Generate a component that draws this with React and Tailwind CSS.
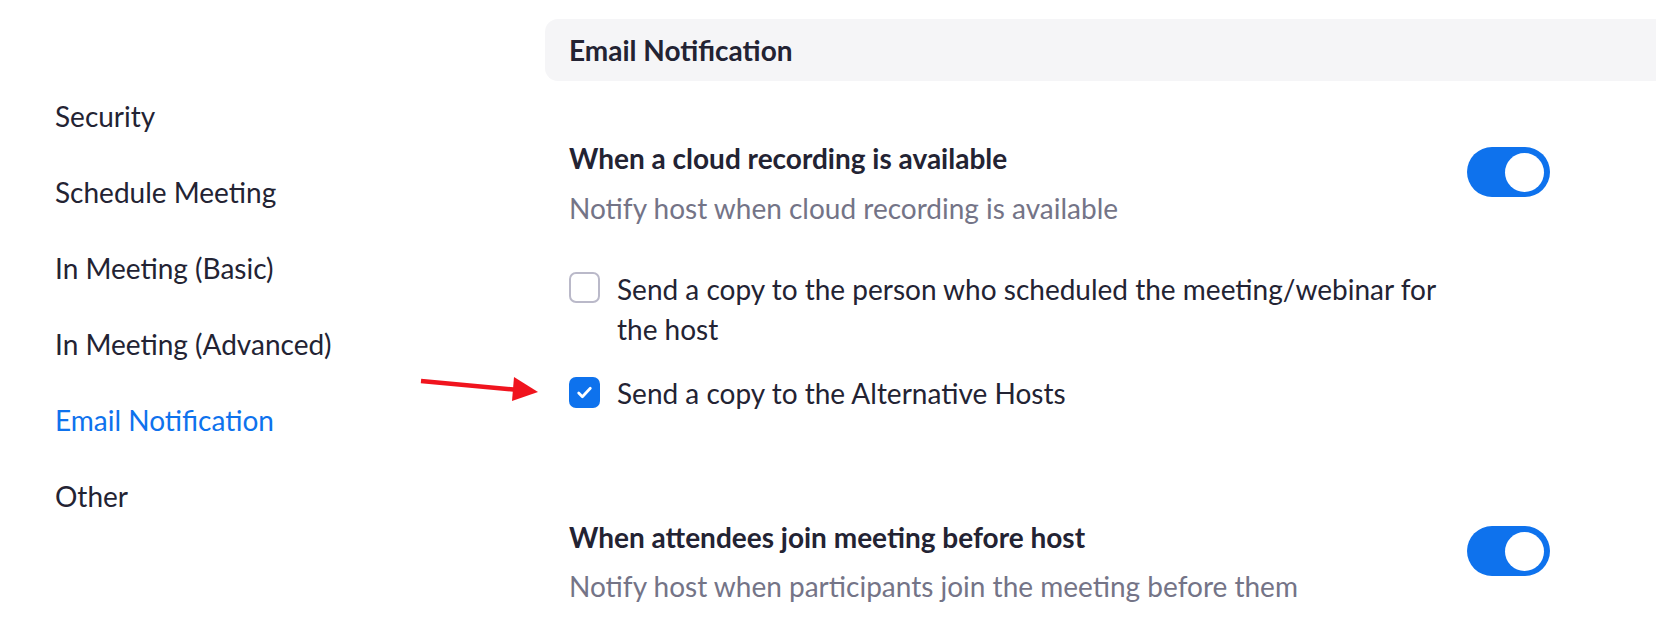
import React from "react";

const font = { fontFamily: "Lato, 'Noto Sans', sans-serif" };

function Toggle() {
  return (
    <div className="mt-[9px] flex h-[50px] w-[83px] shrink-0 items-center justify-end rounded-full bg-[#0e72ed] pr-[6px]">
      <div className="h-[39px] w-[39px] rounded-full bg-white" />
    </div>
  );
}

function Check({ checked, children }) {
  return (
    <div className="flex items-start gap-[17px]">
      {checked ? (
        <div className="mt-[4px] flex h-[31px] w-[31px] shrink-0 items-center justify-center rounded-[7px] bg-[#0e72ed]">
          <svg width="19" height="19" viewBox="0 0 18 18" fill="none">
            <path d="M3.5 9.5l3.5 3.5 7.5-8" stroke="white" strokeWidth="2.6" strokeLinecap="round" strokeLinejoin="round" />
          </svg>
        </div>
      ) : (
        <div className="mt-[3px] h-[31px] w-[31px] shrink-0 rounded-[7px] border-2 border-[#bab9c9] bg-white" />
      )}
      <div className="max-w-[840px] text-[28px] leading-[40px] text-[#232333]">{children}</div>
    </div>
  );
}

export default function App() {
  const nav = [
    "Security",
    "Schedule Meeting",
    "In Meeting (Basic)",
    "In Meeting (Advanced)",
    "Email Notification",
    "Other",
  ];
  return (
    <div className="relative flex h-[638px] w-[1656px] overflow-hidden bg-white" style={font}>
      <div className="w-[545px] shrink-0 pl-[55px] pt-[78px]">
        {nav.map((n) => (
          <div
            key={n}
            className={`flex h-[76px] items-center text-[28px] ${
              n === "Email Notification" ? "text-[#0e72ed]" : "text-[#232333]"
            }`}
          >
            {n}
          </div>
        ))}
      </div>
      <div className="flex-1 pt-[19px]">
        <div className="flex h-[62px] items-center rounded-l-[13px] bg-[#f5f5f7] pl-[24px] text-[28px] font-bold text-[#232333]">
          Email Notification
        </div>
        <div className="pl-[24px] pr-[106px]">
          <div className="mt-[57px] flex items-start justify-between">
            <div>
              <div className="text-[28px] font-bold leading-[40px] text-[#232333]">When a cloud recording is available</div>
              <div className="mt-[10px] text-[28px] leading-[40px] text-[#747487]">Notify host when cloud recording is available</div>
            </div>
            <Toggle />
          </div>
          <div className="mt-[41px] flex flex-col gap-[24px]">
            <Check>Send a copy to the person who scheduled the meeting/webinar for the host</Check>
            <Check checked>Send a copy to the Alternative Hosts</Check>
          </div>
          <div className="mt-[104px] flex items-start justify-between">
            <div>
              <div className="text-[28px] font-bold leading-[40px] text-[#232333]">When attendees join meeting before host</div>
              <div className="mt-[9px] text-[28px] leading-[40px] text-[#747487]">Notify host when participants join the meeting before them</div>
            </div>
            <Toggle />
          </div>
        </div>
      </div>
      <svg className="absolute left-[418px] top-[371px]" width="126" height="32" viewBox="0 0 126 32">
        <line x1="3" y1="10" x2="101" y2="19" stroke="#f0141e" strokeWidth="4.5" />
        <polygon points="96,6 120,21 94,30" fill="#f0141e" />
      </svg>
    </div>
  );
}
